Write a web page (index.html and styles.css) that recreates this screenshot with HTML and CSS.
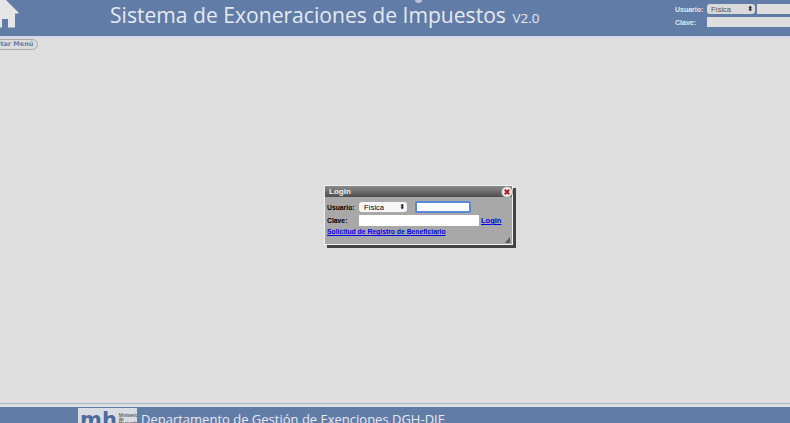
FILE: index.html
```html
<!DOCTYPE html>
<html>
<head>
<meta charset="utf-8" />
<title>Sistema de Exoneraciones de Impuestos</title>
<link rel="stylesheet" href="styles.css">
</head>
<body>

<div class="header">
  <svg class="home" width="20" height="29" viewBox="0 0 20 29">
    <path d="M0 0H6L18.500 12.500V13.500H15V27.500H8V19H2V27.500H0Z" fill="#e6e6e6"/>
  </svg>
  <div class="title">Sistema de Exoneraciones de Impuestos <span class="version">V2.0</span></div>
  <div class="headerDot"></div>
  <div class="topLogin">
    <div class="topRow">
      <label class="topLabel">Usuario:</label>
      <div class="fakeSelect topSelect"><span>Física</span><span class="arrows">⬍</span></div>
      <div class="topInput shortInput"></div>
    </div>
    <div class="topRow">
      <label class="topLabel">Clave:</label>
      <div class="topInput longInput"></div>
    </div>
  </div>
</div>

<div class="main">
  <div class="menuBtn">Quitar Menú</div>
  <div class="dialogWrap">
    <div class="dialog">
      <div class="dialogTitle">
        <span>Login</span>
        <svg class="close" width="12" height="12" viewBox="0 0 12 12">
          <circle cx="6" cy="6" r="5.500" fill="#efe9e9" stroke="#999999"/>
          <path d="M3.800 3.800L8.200 8.200M8.200 3.800L3.800 8.200" stroke="#a81c2c" stroke-width="2"/>
        </svg>
      </div>
      <div class="dialogBody">
        <div class="formRow">
          <label class="formLabel">Usuario:</label>
          <div class="fakeSelect formSelect"><span>Física</span><span class="arrows">⬍</span></div>
          <div class="formInput focused"></div>
        </div>
        <div class="formRow">
          <label class="formLabel">Clave:</label>
          <div class="formInput clave"></div>
          <a class="loginLink" href="#">Login</a>
        </div>
        <a class="regLink" href="#">Solicitud de Registro de Beneficiario</a>
      </div>
      <svg class="grip" width="6" height="6" viewBox="0 0 6 6">
        <path d="M5 0V6H0Z" fill="#555"/>
      </svg>
    </div>
  </div>
</div>

<div class="footerLine"></div>

<div class="footer">
  <div class="logo">
    <span class="logoMark">mh</span>
    <span class="logoText">Ministerio de<br>Hacienda</span>
  </div>
  <div class="footerText">Departamento de Gestión de Exenciones DGH-DIE</div>
</div>

</body>
</html>
```

FILE: styles.css
```css
html, body
{
	margin: 0;
	height: 100%;
}

body
{
	display: flex;
	flex-direction: column;
	height: 423px;
	overflow: hidden;
	background-color: #dedede;
	font-family: "Liberation Sans", Arial, sans-serif;
}

.header
{
	flex: none;
	position: relative;
	display: flex;
	height: 36px;
	background-color: #627ca8;
	border-bottom: 2px solid #d3d9e4;
	overflow: hidden;
}

.home
{
	flex: none;
}

.title
{
	flex: none;
	margin-left: 90px;
	font-family: "Open Sans", sans-serif;
	font-size: 21.100px;
	line-height: 30px;
	color: #e6e9ef;
	white-space: nowrap;
}

.version
{
	margin-left: 1px;
	font-size: 13.500px;
}

.headerDot
{
	position: absolute;
	left: 415px;
	top: -3px;
	width: 7px;
	height: 6px;
	border-radius: 50%;
	background-color: #b9c2d2;
}

.topLogin
{
	flex: none;
	width: 115px;
	margin-left: auto;
	padding-top: 4px;
	display: flex;
	flex-direction: column;
	gap: 3px;
}

.topRow
{
	display: flex;
	align-items: center;
	height: 10px;
}

.topLabel
{
	width: 32px;
	font-size: 7px;
	font-weight: bold;
	color: #e8e8e8;
}

.fakeSelect
{
	display: flex;
	justify-content: space-between;
	align-items: center;
	box-sizing: border-box;
	border-radius: 3px;
}

.arrows
{
	font-family: "DejaVu Sans", sans-serif;
	font-size: 7px;
	color: #222222;
}

.topSelect
{
	width: 48px;
	height: 10px;
	padding: 0 2px 0 4px;
	background-color: #d9d9d9;
	font-size: 7.500px;
	color: #555555;
}

.topInput
{
	height: 10px;
	background-color: #dedede;
}

.shortInput
{
	width: 33px;
	margin-left: 2px;
}

.longInput
{
	width: 83px;
}

.main
{
	flex: 1;
	display: flex;
	flex-direction: column;
}

.menuBtn
{
	align-self: flex-start;
	box-sizing: border-box;
	height: 11px;
	margin-top: 1px;
	margin-left: -18px;
	padding: 0 4px 0 5px;
	border: 1px solid #a9a9a9;
	border-radius: 6px;
	background-color: #dcdcdc;
	font-family: "DejaVu Sans", sans-serif;
	font-size: 6.500px;
	font-weight: bold;
	line-height: 9px;
	color: #6a7fa6;
	white-space: nowrap;
}

.dialogWrap
{
	flex: 1;
	display: flex;
	justify-content: center;
	padding-top: 135px;
	padding-left: 47px;
}

.dialog
{
	position: relative;
	box-sizing: border-box;
	width: 189px;
	height: 60px;
	border: 1px solid #f0f0f0;
	background-color: #a8a8a8;
	box-shadow: 3px 3px 0 #444444;
}

.dialogTitle
{
	display: flex;
	justify-content: space-between;
	align-items: center;
	height: 11px;
	padding: 0 0 0 4px;
	background: linear-gradient(#8a8a8a, #4e4e4e);
	font-size: 8px;
	font-weight: bold;
	color: #f0f0f0;
}

.close
{
	margin-right: -1px;
	margin-top: 1px;
}

.dialogBody
{
	padding: 4px 0 0 2px;
	font-size: 6.800px;
	font-weight: bold;
}

.formRow
{
	display: flex;
	align-items: center;
	height: 11px;
	margin-bottom: 2px;
}

.formRow:first-child
{
	height: 12px;
}

.formLabel
{
	width: 32px;
	color: #000000;
}

.formSelect
{
	width: 48px;
	height: 10px;
	padding: 0 2px 0 5px;
	background-color: #f7f7f7;
	font-size: 7.500px;
	font-weight: normal;
}

.formInput
{
	height: 11px;
	background-color: #ffffff;
}

.focused
{
	box-sizing: border-box;
	width: 56px;
	height: 12px;
	margin-left: 8px;
	border: 2px solid #5a88d8;
	border-radius: 2px;
}

.clave
{
	width: 120px;
}

.loginLink
{
	margin-left: 2px;
	color: #0000ee;
	font-size: 7.500px;
}

.regLink
{
	color: #0000ee;
}

.grip
{
	position: absolute;
	right: 1px;
	bottom: 1px;
}

.footerLine
{
	flex: none;
	height: 1px;
	margin-bottom: 3px;
	background-color: #a9b5cb;
}

.footer
{
	flex: none;
	display: flex;
	height: 16px;
	padding-left: 78px;
	background-color: #627ca8;
	overflow: hidden;
}

.logo
{
	flex: none;
	display: flex;
	width: 59px;
	height: 30px;
	margin-top: 1px;
	background-color: #d9dce2;
	overflow: hidden;
}

.logoMark
{
	margin-left: 2px;
	font-family: "DejaVu Sans", sans-serif;
	font-size: 21px;
	font-weight: bold;
	line-height: 24px;
	color: #4e6a9c;
}

.logoText
{
	margin-left: 2px;
	margin-top: 6px;
	font-size: 4.500px;
	line-height: 4px;
	color: #333333;
}

.footerText
{
	margin-left: 4px;
	padding-top: 3px;
	font-family: "Open Sans", sans-serif;
	font-size: 13px;
	line-height: 18px;
	color: #e8ebf1;
	white-space: nowrap;
}
```
